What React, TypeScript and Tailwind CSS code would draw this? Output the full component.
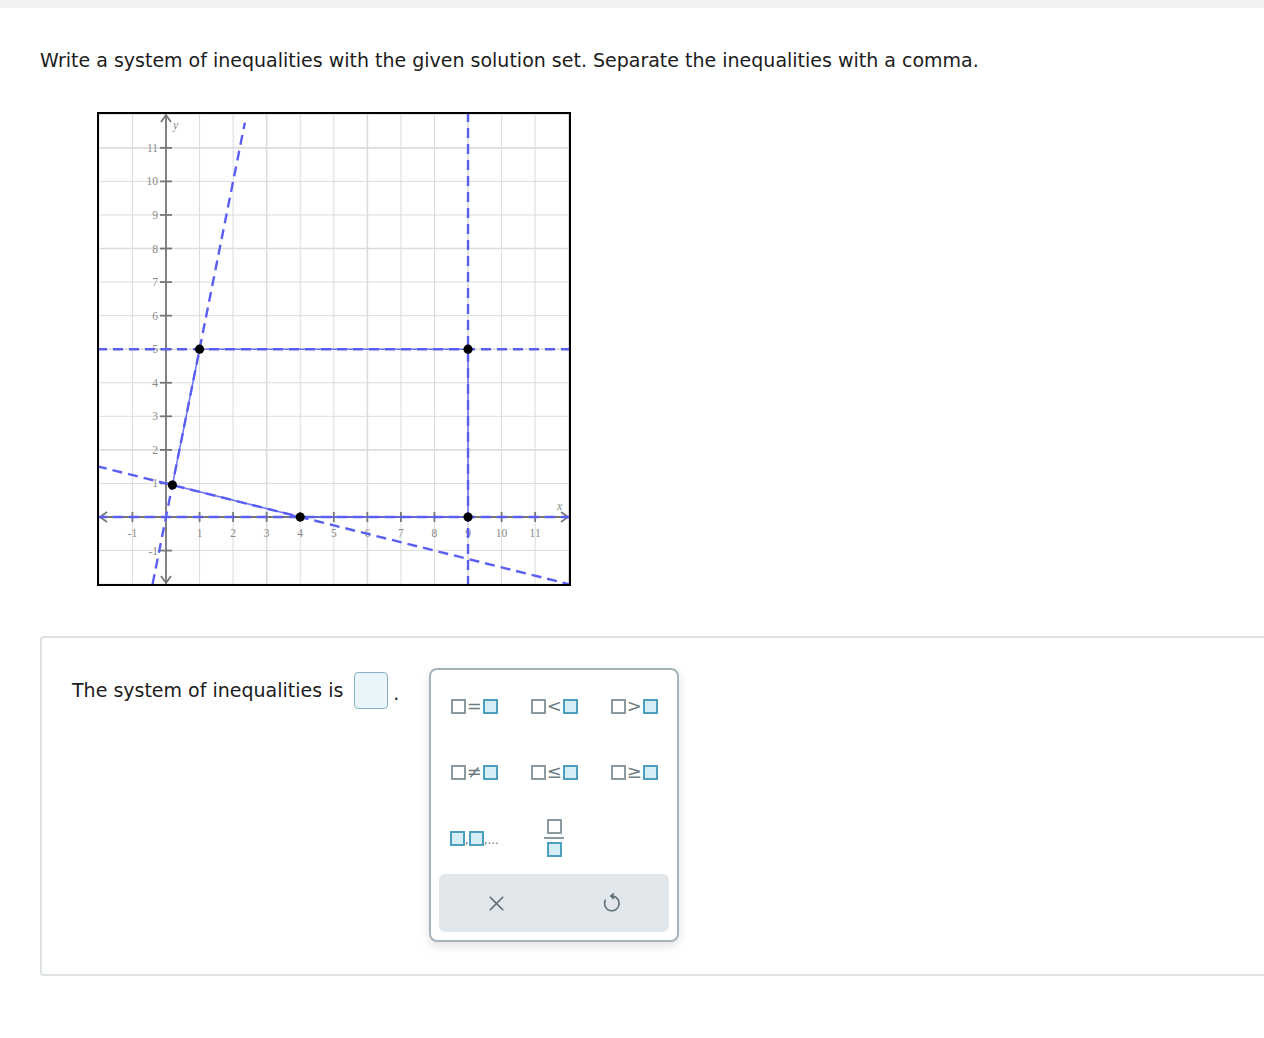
import { X } from "lucide-react";

const U = 33.56;
const OX = 69;
const OY = 405;
const px = (x: number) => OX + x * U;
const py = (y: number) => OY - y * U;
const BLUE = "#5a5ff2";

const ticks = [-1, 1, 2, 3, 4, 5, 6, 7, 8, 9, 10, 11];
const grid = [-2, -1, 0, 1, 2, 3, 4, 5, 6, 7, 8, 9, 10, 11, 12];

function Graph() {
  const vx = 4 / 21;
  const vy = 20 / 21;
  const poly: [number, number][] = [
    [vx, vy],
    [1, 5],
    [9, 5],
    [9, 0],
    [4, 0],
    [vx, vy],
  ];
  return (
    <svg width={474} height={474} className="block">
      {grid.map((g) => (
        <line
          key={"v" + g}
          x1={px(g)}
          x2={px(g)}
          y1={0}
          y2={474}
          stroke="#dcdcdc"
          strokeWidth={g % 3 === 0 ? 1.6 : 1}
        />
      ))}
      {grid.map((g) => (
        <line
          key={"h" + g}
          y1={py(g)}
          y2={py(g)}
          x1={0}
          x2={474}
          stroke="#dcdcdc"
          strokeWidth={g % 3 === 2 ? 1.6 : 1}
        />
      ))}

      {/* axes */}
      <g stroke="#777" strokeWidth={1.8} fill="none">
        <line x1={2} x2={472} y1={OY} y2={OY} />
        <line x1={OX} x2={OX} y1={2} y2={472} />
        <polyline points={`${10},${OY - 5} ${3},${OY} ${10},${OY + 5}`} />
        <polyline points={`${464},${OY - 5} ${471},${OY} ${464},${OY + 5}`} />
        <polyline points={`${OX - 5},${10} ${OX},${3} ${OX + 5},${10}`} />
        <polyline points={`${OX - 5},${464} ${OX},${471} ${OX + 5},${464}`} />
        {ticks.map((t) => (
          <line key={"tx" + t} x1={px(t)} x2={px(t)} y1={OY - 5} y2={OY + 5} />
        ))}
        {ticks.map((t) => (
          <line key={"ty" + t} y1={py(t)} y2={py(t)} x1={OX - 6} x2={OX + 6} />
        ))}
      </g>
      <g fill="#8a8a8a" fontFamily="'Liberation Serif', serif" fontSize={11.5}>
        {ticks.map((t) => (
          <text key={"lx" + t} x={px(t)} y={OY + 20} textAnchor="middle">
            {t}
          </text>
        ))}
        {ticks.map((t) => (
          <text key={"ly" + t} x={OX - 8} y={py(t) + 4} textAnchor="end">
            {t}
          </text>
        ))}
        <text x={OX + 7} y={17} fontStyle="italic" fontSize={12}>
          y
        </text>
        <text x={460} y={OY - 7} fontStyle="italic" fontSize={12}>
          x
        </text>
      </g>

      {/* region edges, then dashed boundary lines on top */}
      <polyline
        points={poly.map(([x, y]) => `${px(x)},${py(y)}`).join(" ")}
        stroke={BLUE}
        strokeWidth={1.6}
        strokeOpacity={0.85}
        fill="none"
      />
      <g stroke={BLUE} strokeWidth={2.4} strokeDasharray="10 6" fill="none">
        <line x1={0} x2={474} y1={py(5)} y2={py(5)} />
        <line x1={0} x2={474} y1={OY} y2={OY} />
        <line x1={px(9)} x2={px(9)} y1={0} y2={474} />
        <line x1={px(-0.4)} y1={py(-2)} x2={px(2.35)} y2={py(11.75)} />
        <line x1={0} y1={py(1 + 2.056 / 4)} x2={474} y2={py(1 - 12.07 / 4)} />
      </g>
      {poly.slice(0, 5).map(([x, y], i) => (
        <circle key={i} cx={px(x)} cy={py(y)} r={4.6} fill="#000" />
      ))}
      <rect x={1} y={1} width={472} height={472} fill="none" stroke="#000" strokeWidth={2} />
    </svg>
  );
}

function Box({ blue }: { blue?: boolean }) {
  return (
    <span
      className={
        blue
          ? "inline-block w-[15px] h-[15px] border-2 border-[#4c9fbd] bg-[#d6edf5]"
          : "inline-block w-[15px] h-[15px] border-2 border-[#8b9aa1] bg-white"
      }
    />
  );
}

function Rel({ sym }: { sym: string }) {
  return (
    <button className="h-[66px] flex items-center justify-center">
      <span className="flex items-center">
        <Box />
        <span className="text-[#6d7c83] text-[18px] leading-none w-[17px] text-center">{sym}</span>
        <Box blue />
      </span>
    </button>
  );
}

function Undo() {
  return (
    <svg width={22} height={22} viewBox="0 0 24 24" fill="none" stroke="#5d6d75" strokeWidth={1.8} strokeLinecap="round" strokeLinejoin="round">
      <path d="M11 4.5 A8 8 0 1 1 4.6 9" />
      <path d="M13.5 2 L10.8 4.5 L13.5 7" />
    </svg>
  );
}

export default function App() {
  return (
    <div
      className="min-h-[1038px] bg-white overflow-hidden text-[#1c1c1c]"
      style={{ fontFamily: "'DejaVu Sans', Verdana, sans-serif" }}
    >
      <div className="h-[8px] bg-[#f0f2f2]" />
      <div className="pl-[40px] pt-[39px]">
        <p className="text-[19px] leading-[26px]">
          Write a system of inequalities with the given solution set. Separate the inequalities with a comma.
        </p>
        <div className="ml-[57px] mt-[39px]">
          <Graph />
        </div>
        <div className="mt-[50px] w-[1260px] h-[340px] border-2 border-[#dde2e4] rounded-[4px] pl-[30px] pt-[32px] flex items-start">
          <div className="flex items-center text-[19px] mt-[2px]">
            <span>The system of inequalities is</span>
            <span className="ml-[11px] inline-block w-[34px] h-[37px] border border-[#86b3c4] rounded-[4px] bg-[#eaf5f9]" />
            <span className="ml-[5px] mt-[6px]">.</span>
          </div>
          <div className="ml-[30px] -mt-[2px] w-[250px] h-[274px] border-2 border-[#a5b4ba] rounded-[8px] bg-white shadow-[0_4px_10px_rgba(0,0,0,0.12)] px-[8px] pt-[3px] pb-[8px] flex flex-col">
            <div className="grid grid-cols-3 -mx-[5px]">
              <Rel sym="=" />
              <Rel sym="<" />
              <Rel sym=">" />
              <Rel sym="≠" />
              <Rel sym="≤" />
              <Rel sym="≥" />
              <button className="h-[66px] flex items-center justify-center">
                <span className="flex items-end">
                  <Box blue />
                  <span className="text-[#6d7c83] text-[12px] leading-none">,</span>
                  <Box blue />
                  <span className="text-[#6d7c83] text-[12px] leading-none">,...</span>
                </span>
              </button>
              <button className="h-[66px] flex items-center justify-center">
                <span className="flex flex-col items-center gap-[3px]">
                  <Box />
                  <span className="block w-[20px] h-[2px] bg-[#8b9aa1]" />
                  <Box blue />
                </span>
              </button>
            </div>
            <div className="mt-auto h-[58px] bg-[#e1e7ea] rounded-[6px] grid grid-cols-2">
              <button className="flex items-center justify-center">
                <X size={25} strokeWidth={1.6} color="#5d6d75" />
              </button>
              <button className="flex items-center justify-center">
                <Undo />
              </button>
            </div>
          </div>
        </div>
      </div>
    </div>
  );
}
